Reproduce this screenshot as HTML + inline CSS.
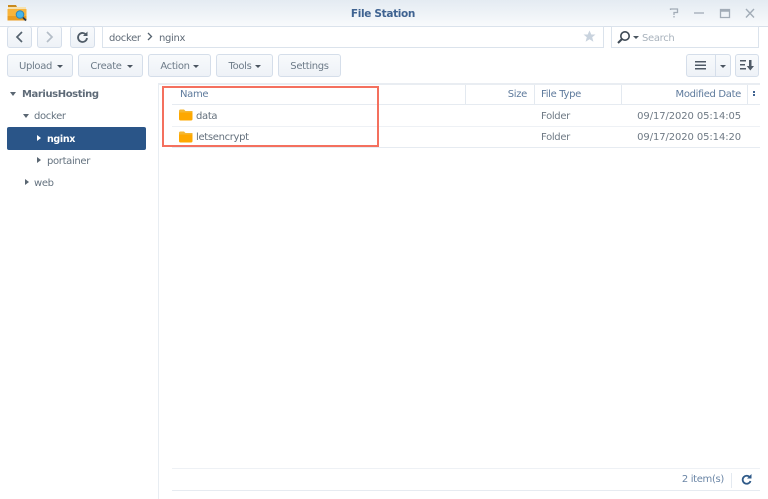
<!DOCTYPE html>
<html><head><meta charset="utf-8"><style>
*{box-sizing:border-box;margin:0;padding:0}
html,body{width:768px;height:499px;overflow:hidden;background:#fff}
body{position:relative;font-family:"DejaVu Sans",sans-serif;font-size:10px;color:#64727f;letter-spacing:-.33px}
.a{position:absolute}
.t{position:absolute;white-space:nowrap;line-height:14px}
.b{position:absolute;border:1px solid #d5deea;border-radius:3px;background:linear-gradient(#f8fafc,#eef2f7);text-align:center;color:#6d7b88;line-height:24px}
.l{position:absolute;height:1px;background:#e6ebf1}
.v{position:absolute;width:1px;background:#e3e9f0}
.c{position:absolute;width:0;height:0;border-left:3px solid transparent;border-right:3px solid transparent;border-top:3px solid #4a5560}
.r{position:absolute;width:0;height:0;border-top:3.5px solid transparent;border-bottom:3.5px solid transparent;border-left:4px solid #5a6672}
.d{position:absolute;width:0;height:0;border-left:4px solid transparent;border-right:4px solid transparent;border-top:4px solid #5a6672}
.n{letter-spacing:-.1px}
</style></head><body>
<div class="a" style="left:0;top:0;width:768px;height:27px;background:linear-gradient(#e4ebf2,#f8fafc);border-bottom:1px solid #d8e0ea"></div>
<svg class="a" style="left:7px;top:4px" width="21" height="18" viewBox="0 0 21 18"><path d="M1 1h8l1 2h9v3H1z" fill="#c98a1e"/><path d="M1 3h18v2H1z" fill="#f6e2b0"/><path d="M0.500 5h19v11.500h-19z" fill="#f8b43a"/><path d="M0.500 12h19v4.500h-19z" fill="#eb9d20"/><circle cx="13" cy="10.500" r="3.800" fill="#45b5ea" stroke="#2f86b8"/><path d="M16 13.500l3 3" stroke="#2c3a48" stroke-width="1.800"/></svg>
<div class="t" style="left:283px;top:7px;width:200px;text-align:center;font-weight:bold;font-size:10.500px;color:#3f6391">File Station</div>
<svg class="a" style="left:665px;top:6px" width="96" height="14" viewBox="0 0 96 14" fill="none" stroke="#a2acb7" stroke-width="1.300"><path d="M5.500 4V3h7v3.500H9V9M9 10v1.500"/><path d="M29 7h10"/><path d="M55.500 3.500h9v8h-9z"/><path d="M55.500 4.500h9" stroke-width="2.500"/><path d="M81 3l8 8.500M89 3l-8 8.500" stroke-width="1.400"/></svg>

<div class="b" style="left:7px;top:26px;width:25px;height:22px"></div>
<svg class="a" style="left:7px;top:26px" width="25" height="22" fill="none" stroke="#56636f" stroke-width="1.700"><path d="M15 6l-5 5 5 5"/></svg>
<div class="b" style="left:37px;top:26px;width:25px;height:22px"></div>
<svg class="a" style="left:37px;top:26px" width="25" height="22" fill="none" stroke="#b4bdc7" stroke-width="1.700"><path d="M10 6l5 5-5 5"/></svg>
<div class="b" style="left:70px;top:26px;width:25px;height:22px"></div>
<svg class="a" style="left:70px;top:26px" width="25" height="22" fill="none" stroke="#505c68" stroke-width="1.800"><path d="M16.300 9A4.500 4.500 0 1 0 17 12"/><path d="M17.500 5.500v4.500h-4.500z" fill="#505c68" stroke="none"/></svg>
<div class="a" style="left:102px;top:26px;width:502px;height:22px;border:1px solid #dbe3ec;background:#fff"></div>
<div class="t" style="left:109px;top:32px;color:#606b77">docker</div>
<svg class="a" style="left:147px;top:32px" width="6" height="9" fill="none" stroke="#56636f" stroke-width="1.300"><path d="M1 1l3.500 3.500L1 8"/></svg>
<div class="t" style="left:159px;top:32px;color:#606b77">nginx</div>
<svg class="a" style="left:583px;top:30px" width="13" height="13" viewBox="0 0 13 13"><path d="M6.500 .500l1.800 4h4.200l-3.300 2.800 1.200 4.500-3.900-2.500-3.900 2.500 1.200-4.500L.500 4.500h4.200z" fill="#c9d3de"/></svg>
<div class="a" style="left:611px;top:26px;width:148px;height:22px;border:1px solid #dbe3ec;background:#fff"></div>
<svg class="a" style="left:617px;top:30px" width="14" height="14" fill="none" stroke="#3e4a55" stroke-width="1.600"><circle cx="8" cy="6" r="4.200"/><path d="M5 9l-4 4" stroke-width="2"/></svg>
<div class="c" style="left:633px;top:36px"></div>
<div class="t" style="left:642px;top:32px;color:#a9b3bd">Search</div>

<div class="b" style="left:7px;top:54px;width:66px;height:23px;padding-right:9px">Upload</div><div class="c" style="left:57px;top:65px"></div>
<div class="b" style="left:78px;top:54px;width:65px;height:23px;padding-right:9px">Create</div><div class="c" style="left:127px;top:65px"></div>
<div class="b" style="left:148px;top:54px;width:63px;height:23px;padding-right:9px">Action</div><div class="c" style="left:193px;top:65px"></div>
<div class="b" style="left:216px;top:54px;width:57px;height:23px;padding-right:9px">Tools</div><div class="c" style="left:255px;top:65px"></div>
<div class="b" style="left:278px;top:54px;width:63px;height:23px">Settings</div>
<div class="b" style="left:686px;top:54px;width:45px;height:23px"></div>
<div class="v" style="left:715px;top:55px;height:21px;background:#d5deea"></div>
<svg class="a" style="left:694px;top:60px" width="14" height="11" fill="#4f5a66"><path d="M1 1h11v1.500H1zM1 4.500h11V6H1zM1 8h11v1.500H1z"/></svg>
<div class="c" style="left:720px;top:65px"></div>
<div class="b" style="left:735px;top:54px;width:24px;height:23px"></div>
<svg class="a" style="left:740px;top:59px" width="15" height="13" fill="#4f5a66"><path d="M0 1h6v1.500H0zM0 5h5v1.500H0zM0 9h6v1.500H0zM9 1h2.500v6H14l-3.700 4.500L6.800 7H9z"/></svg>

<div class="v" style="left:158px;top:83px;height:416px;background:#e8edf2"></div>
<div class="a" style="left:159px;top:83px;width:601px;height:2px;background:#e9edf2"></div>

<div class="d" style="left:10px;top:92px;border-left-width:3.500px;border-right-width:3.500px"></div>
<div class="t" style="left:22px;top:88px;font-weight:bold;color:#5f6b78;letter-spacing:-.4px">MariusHosting</div>
<div class="d" style="left:23px;top:114px;border-left-width:3.500px;border-right-width:3.500px"></div>
<div class="t" style="left:34px;top:110px">docker</div>
<div class="a" style="left:7px;top:127px;width:139px;height:23px;background:#2a5588;border-radius:2px"></div>
<div class="r" style="left:37px;top:135px;border-left-color:#fff"></div>
<div class="t" style="left:47px;top:133px;color:#fff;font-weight:bold;font-size:9.500px">nginx</div>
<div class="r" style="left:37px;top:157px"></div>
<div class="t" style="left:47px;top:155px">portainer</div>
<div class="r" style="left:25px;top:179px"></div>
<div class="t" style="left:34px;top:177px">web</div>

<div class="t" style="left:180px;top:88px;color:#5e7a9c">Name</div>
<div class="t" style="left:400px;top:88px;width:127px;text-align:right;color:#5e7a9c">Size</div>
<div class="t" style="left:541px;top:88px;color:#5e7a9c">File Type</div>
<div class="t" style="left:640px;top:88px;width:101px;text-align:right;color:#5e7a9c">Modified Date</div>
<div class="a" style="left:753px;top:91px;width:2px;height:2px;background:#3f6391"></div><div class="a" style="left:753px;top:94px;width:2px;height:2px;background:#3f6391"></div>
<div class="v" style="left:465px;top:85px;height:19px"></div>
<div class="v" style="left:534px;top:85px;height:19px"></div>
<div class="v" style="left:621px;top:85px;height:19px"></div>
<div class="v" style="left:747px;top:85px;height:19px"></div>
<div class="l" style="left:172px;top:104px;width:588px"></div>
<div class="l" style="left:172px;top:126px;width:588px;background:#eef1f5"></div>
<div class="l" style="left:172px;top:147px;width:588px"></div>

<svg class="a" style="left:179px;top:109px" width="14" height="12"><path d="M0 2q0-1.500 1.500-1.500h3.500l1.500 1.500h7v2H0z" fill="#f5b731"/><path d="M0 3.500h13.500V10q0 1.500-1.500 1.500H1.500Q0 11.500 0 10z" fill="#fea800"/></svg>
<div class="t" style="left:196px;top:110px;color:#64707c">data</div>
<div class="t" style="left:541px;top:110px;color:#6f7a85">Folder</div>
<div class="t n" style="left:600px;top:110px;width:141px;text-align:right;color:#6f7a85">09/17/2020 05:14:05</div>
<svg class="a" style="left:179px;top:131px" width="14" height="12"><path d="M0 2q0-1.500 1.500-1.500h3.500l1.500 1.500h7v2H0z" fill="#f5b731"/><path d="M0 3.500h13.500V10q0 1.500-1.500 1.500H1.500Q0 11.500 0 10z" fill="#fea800"/></svg>
<div class="t" style="left:196px;top:131px;color:#64707c">letsencrypt</div>
<div class="t" style="left:541px;top:131px;color:#6f7a85">Folder</div>
<div class="t n" style="left:600px;top:131px;width:141px;text-align:right;color:#6f7a85">09/17/2020 05:14:20</div>

<div class="a" style="left:162px;top:86px;width:217px;height:61px;border:2px solid #f4705e"></div>

<div class="l" style="left:172px;top:468px;width:588px;background:#eef1f5"></div>
<div class="l" style="left:172px;top:490px;width:588px"></div>
<div class="t" style="left:640px;top:473px;width:84px;text-align:right;color:#6b86a6">2 item(s)</div>
<div class="v" style="left:731px;top:473px;height:15px"></div>
<svg class="a" style="left:740px;top:473px" width="13" height="13" fill="none" stroke="#2f5a88" stroke-width="1.800"><path d="M10 4.500A4 4 0 1 0 10.500 8"/><path d="M11.500 1v4.500H7z" fill="#2f5a88" stroke="none"/></svg>
</body></html>
